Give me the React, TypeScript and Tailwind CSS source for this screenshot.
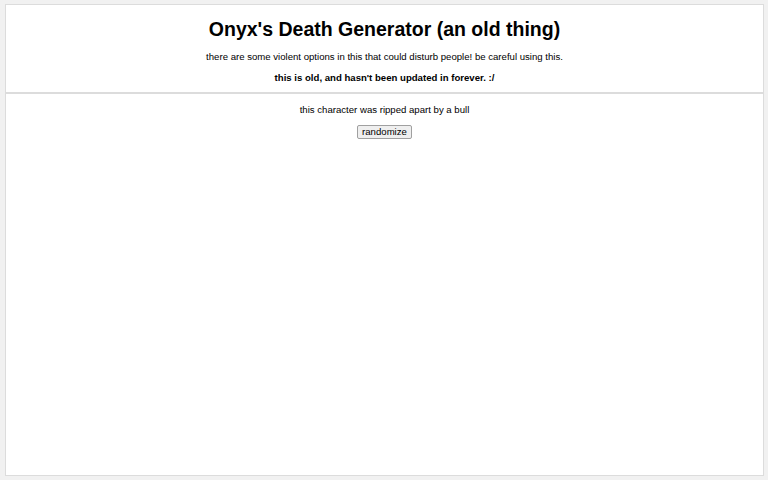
export default function App() {
  return (
    <div
      className="w-[768px] h-[480px] bg-[#f1f1f1] pt-[4px] pl-[5px]"
      style={{ fontFamily: '"Liberation Sans", Arial, sans-serif' }}
    >
      <div className="w-[759px] h-[472px] bg-white border border-[#dcdcdc] flex flex-col">
        <header className="h-[89px] border-b-2 border-[#dcdcdc] flex flex-col items-center text-black">
          <h1 className="mt-[12px] text-[19.5px] leading-[24px] font-bold">
            Onyx's Death Generator (an old thing)
          </h1>
          <p className="mt-[10px] text-[9.6px] leading-[12px]">
            there are some violent options in this that could disturb people! be careful using this.
          </p>
          <p className="mt-[9px] text-[9.6px] leading-[12px] font-bold">
            this is old, and hasn't been updated in forever. :/
          </p>
        </header>
        <main className="flex flex-col items-center text-black">
          <p className="mt-[10px] text-[9.6px] leading-[12px]">this character was ripped apart by a bull</p>
          <button className="mt-[9px] px-[4px] h-[14px] text-[9.6px] leading-[12px] bg-[#efefef] border border-[#a0a0a0] rounded-[2px]">
            randomize
          </button>
        </main>
      </div>
    </div>
  );
}
